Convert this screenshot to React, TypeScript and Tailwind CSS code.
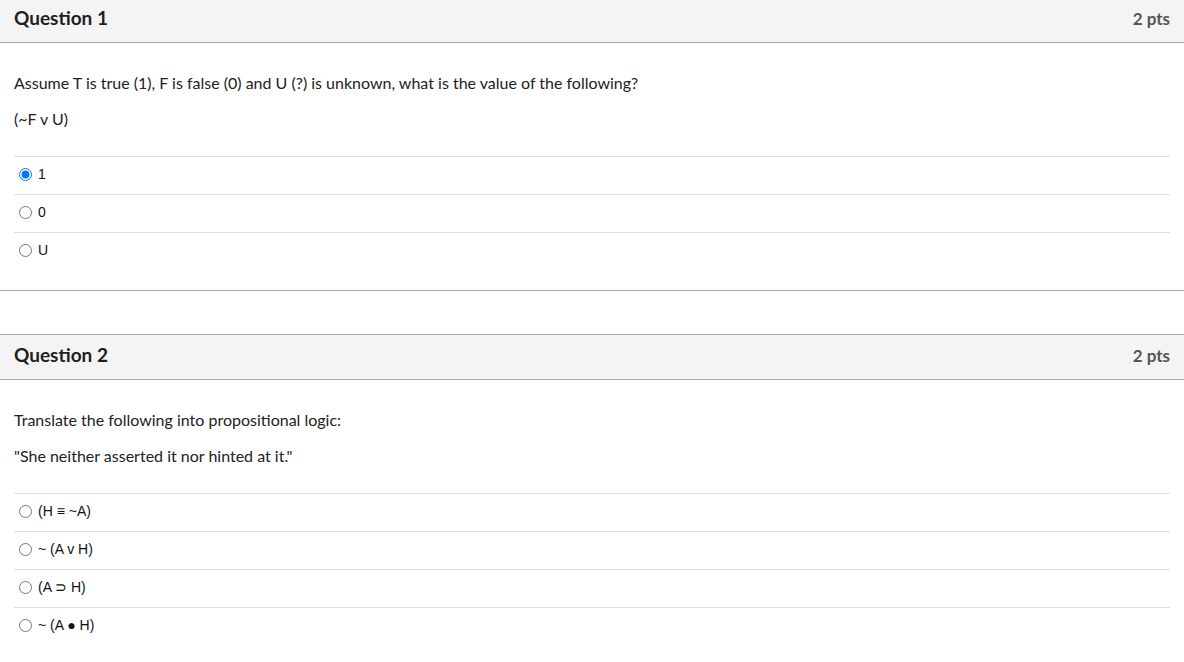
import React from 'react';

type Question = {
  title: string;
  points: string;
  lines: string[];
  answers: string[];
  checked?: number;
};

const questions: Question[] = [
  {
    title: 'Question 1',
    points: '2 pts',
    lines: [
      'Assume T is true (1), F is false (0) and U (?) is unknown, what is the value of the following?',
      '(~F v U)',
    ],
    answers: ['1', '0', 'U'],
    checked: 0,
  },
  {
    title: 'Question 2',
    points: '2 pts',
    lines: ['Translate the following into propositional logic:', '"She neither asserted it nor hinted at it."'],
    answers: ['(H ≡ ~A)', '~ (A v H)', '(A ⊃ H)', '~ (A ● H)'],
  },
];

function QuestionBlock({ q, idx }: { q: Question; idx: number }) {
  return (
    <div className={idx === 0 ? '-mt-[3px] border-b border-[#aaaaaa] pb-[20px]' : 'mt-[43px] pb-[20px]'}>
      {/* header */}
      <div className="flex h-[46px] items-center justify-between border-y border-[#aaaaaa] bg-[#f4f4f4] px-[14px] pb-[3px]">
        <h2 className="text-[19px] font-bold text-[#1f1f1f]">{q.title}</h2>
        <span className="text-[17px] font-bold text-[#555555]">{q.points}</span>
      </div>

      {/* body */}
      <div className="px-[14px] pt-[29px] text-[16px] text-[#222222]">
        {q.lines.map((line, i) => (
          <p key={i} className={i === 0 ? 'h-[22px] leading-[22px]' : 'mt-[14px] h-[22px] leading-[22px]'}>
            {line}
          </p>
        ))}

        <div className="mt-[26px]">
          {q.answers.map((a, i) => (
            <label
              key={i}
              className="flex h-[38px] items-center gap-[6px] border-t border-[#dddddd] pb-[3px] pl-[5px] text-[14px] text-[#111111]"
              style={{ fontFamily: '"Liberation Sans", Arial, sans-serif' }}
            >
              <input
                type="radio"
                name={`q${idx}`}
                defaultChecked={q.checked === i}
                className="m-0 h-[13px] w-[13px]"
              />
              <span>{a}</span>
            </label>
          ))}
        </div>
      </div>
    </div>
  );
}

export default function App() {
  return (
    <div className="min-h-[662px] overflow-hidden bg-white" style={{ fontFamily: 'Lato, "Noto Sans", sans-serif' }}>
      {questions.map((q, i) => (
        <QuestionBlock key={i} q={q} idx={i} />
      ))}
    </div>
  );
}
